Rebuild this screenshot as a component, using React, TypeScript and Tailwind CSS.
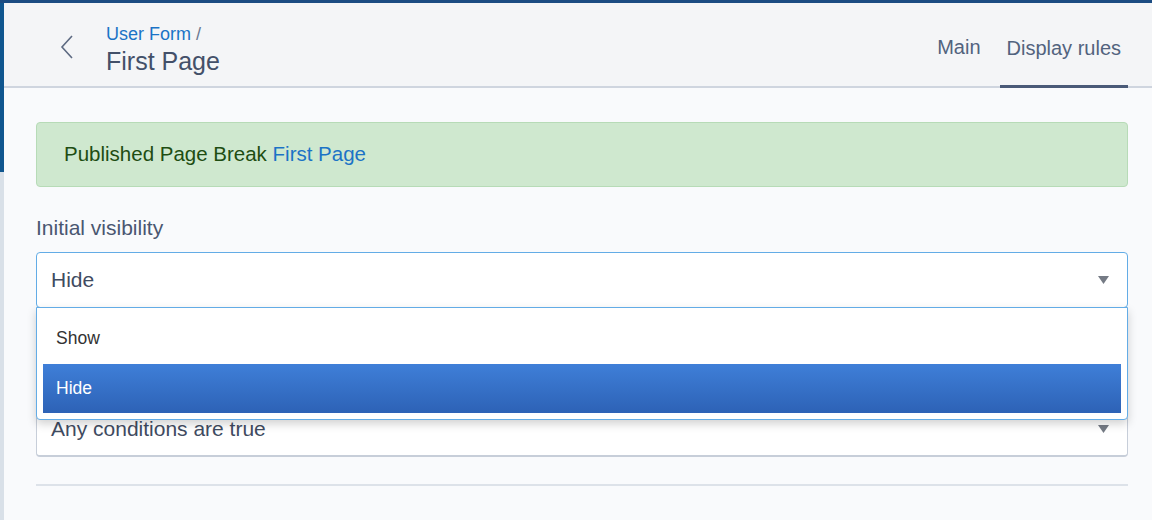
import { useState } from "react";

const options = ["Show", "Hide"];

function Caret() {
  return (
    <svg width="11" height="8" viewBox="0 0 11 8" className="absolute right-[18px] top-1/2 -translate-y-1/2">
      <path d="M0 0 H11 L5.5 8 Z" fill="#757b85" />
    </svg>
  );
}

function Header() {
  return (
    <header className="h-[85px] flex items-stretch bg-[#f4f5f7] border-b-2 border-[#cfd5df]">
      <div className="flex items-center pl-[56px]">
        <button type="button" className="w-[14px] h-[24px] flex items-center justify-center mt-[4px]">
          <svg width="14" height="24" viewBox="0 0 14 24">
            <path d="M12 1 L2 12 L12 23" fill="none" stroke="#5d6a82" strokeWidth="1.6" />
          </svg>
        </button>
        <div className="ml-[32px] flex flex-col pt-[10px]">
          <div className="text-[18px] leading-[22px] text-[#6b7a92]">
            <a href="#" className="text-[#1b73c6]">User Form</a> /
          </div>
          <div className="text-[25px] leading-[32px] text-[#435069]">First Page</div>
        </div>
      </div>
      <nav className="ml-auto flex items-stretch pr-[24px] text-[20px] text-[#52637e]">
        <a href="#" className="px-[7px] flex items-center pt-[5px]">Main</a>
        <a href="#" className="ml-[12px] px-[7px] flex items-center border-b-[3px] border-[#4a5a78] mb-[-2px] pt-[8px]">
          Display rules
        </a>
      </nav>
    </header>
  );
}

export default function App() {
  const [value, setValue] = useState("Hide");
  const [open, setOpen] = useState(true);

  return (
    <div className="h-[520px] w-full overflow-hidden flex bg-[#f9fafc] font-['Liberation_Sans',Arial,sans-serif] border-t-[3px] border-[#1c4c82]">
      <div className="w-[4px] flex flex-col">
        <div className="h-[169px] bg-[#10568f]" />
        <div className="flex-1 bg-[#d9e0e8]" />
      </div>
      <div className="flex-1 flex flex-col">
        <Header />
        <main className="pl-[32px] pr-[24px] pt-[34px]">
          <div className="h-[65px] flex items-center px-[27px] rounded-[4px] bg-[#cfe8cf] border border-[#b7dbb7] text-[20.5px] text-[#1e4d12]">
            Published Page Break&nbsp;<a href="#" className="text-[#1b73c6]">First Page</a>
          </div>

          <label className="block mt-[28px] text-[21px] leading-[26px] text-[#4a5670]">Initial visibility</label>
          <div className="relative mt-[11px]">
            <button
              type="button"
              onClick={() => setOpen(!open)}
              className="relative w-full h-[56px] text-left pl-[14px] bg-white border border-[#63ace6] rounded-[4px] text-[21px] text-[#3f4b61]"
            >
              {value}
              <Caret />
            </button>
            {open && (
              <ul className="absolute z-10 left-0 right-0 top-[55px] h-[113px] bg-white border border-[#63ace6] rounded-b-[4px] shadow-[0_4px_10px_rgba(0,0,0,0.18)] px-[6px] pt-[5px] text-[17.5px]">
                {options.map((o) => (
                  <li
                    key={o}
                    onClick={() => {
                      setValue(o);
                      setOpen(false);
                    }}
                    className={
                      o === value
                        ? "h-[49px] flex items-center px-[13px] text-white bg-gradient-to-b from-[#3f7fd8] to-[#2d62b6]"
                        : "h-[51px] flex items-center px-[13px] text-[#333333]"
                    }
                  >
                    {o}
                  </li>
                ))}
              </ul>
            )}
          </div>

          {/* condition mode, sits under the open list */}
          <div className="relative mt-[93px]">
            <button
              type="button"
              className="relative w-full h-[56px] text-left pl-[14px] bg-white border border-[#c7ced9] border-b-2 rounded-[4px] text-[21px] text-[#3f4b61]"
            >
              Any conditions are true
              <Caret />
            </button>
          </div>

          <hr className="mt-[27px] border-t-2 border-[#dde2e9]" />
        </main>
      </div>
    </div>
  );
}
